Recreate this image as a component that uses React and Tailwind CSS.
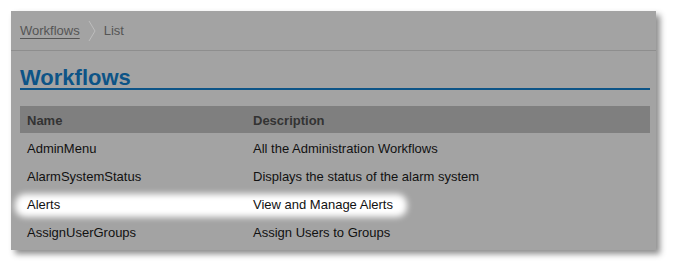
import React from "react";

const ROWS = [
  { name: "AdminMenu", desc: "All the Administration Workflows" },
  { name: "AlarmSystemStatus", desc: "Displays the status of the alarm system" },
  { name: "Alerts", desc: "View and Manage Alerts", hi: true },
  { name: "AssignUserGroups", desc: "Assign Users to Groups" },
];

export default function App() {
  return (
    <div
      className="w-[675px] h-[269px] bg-white pt-[11px] pl-[11px]"
      style={{ fontFamily: '"Liberation Sans", Arial, sans-serif' }}
    >
      <div className="w-[645px] h-[239px] bg-[#a3a3a3] shadow-[4px_4px_6px_rgba(0,0,0,0.45)]">
        {/* breadcrumb */}
        <div className="h-[40px] border-b border-[#8e8e8e] pl-[9px] flex items-center text-[13px] text-[#555]">
          <span className="underline underline-offset-[3px] decoration-[#555]">Workflows</span>
          <svg width="8" height="22" viewBox="0 0 8 22" className="mx-[8px]">
            <path d="M1 1 L7 11 L1 21" fill="none" stroke="#bdbdbd" strokeWidth="1" />
          </svg>
          <span>List</span>
        </div>

        <div className="pl-[9px] pr-[6px]">
          <h1 className="mt-[14px] h-[25px] leading-[26px] border-b-2 border-[#0d5487] text-[22px] font-bold text-[#0d5487]">
            Workflows
          </h1>

          <div className="mt-[16px] text-[13px]">
            <div className="h-[27px] pt-[2px] bg-[#7f7f7f] flex items-center font-bold text-[#333]">
              <div className="w-[233px] pl-[7px]">Name</div>
              <div>Description</div>
            </div>
            {ROWS.map((r) => (
              <div key={r.name} className="relative h-[28px] pt-[3px] flex items-center text-[#111]">
                {r.hi && (
                  <div className="absolute left-[-5px] top-[5px] w-[392px] h-[23px] bg-white rounded-[10px] blur-[3px]" />
                )}
                <div className="relative w-[233px] pl-[7px]">{r.name}</div>
                <div className="relative">{r.desc}</div>
              </div>
            ))}
          </div>
        </div>
      </div>
    </div>
  );
}
